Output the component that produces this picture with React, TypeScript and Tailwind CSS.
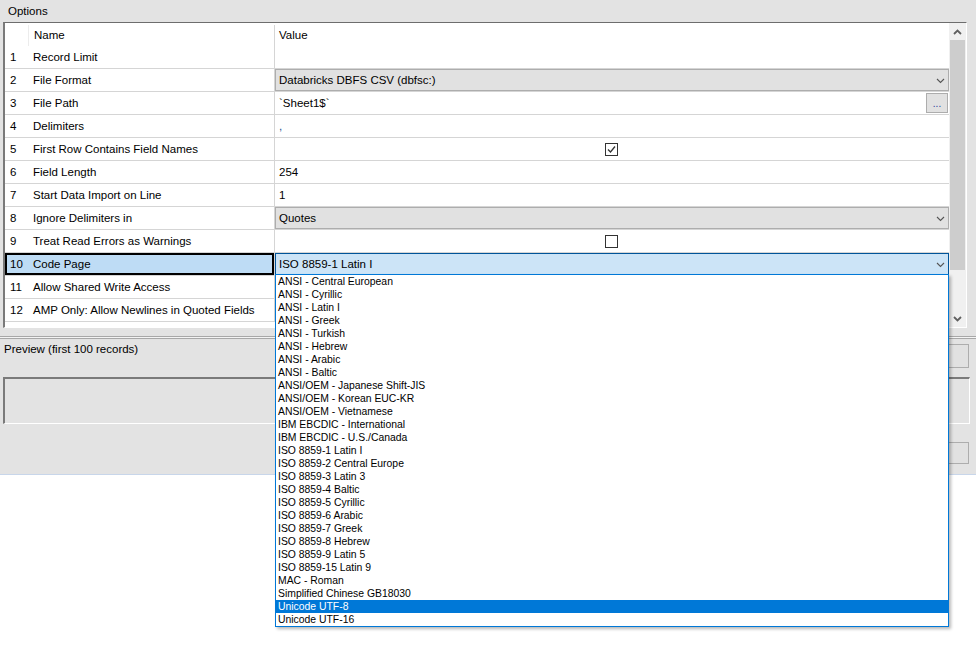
import React from 'react'

type Row = {
    n: number
    name: string
    kind: 'text' | 'combo' | 'path' | 'check' | 'active'
    value?: string
    checked?: boolean
}

const rows: Row[] = [
    { n: 1, name: 'Record Limit', kind: 'text', value: '' },
    { n: 2, name: 'File Format', kind: 'combo', value: 'Databricks DBFS CSV (dbfsc:)' },
    { n: 3, name: 'File Path', kind: 'path', value: '`Sheet1$`' },
    { n: 4, name: 'Delimiters', kind: 'text', value: ',' },
    { n: 5, name: 'First Row Contains Field Names', kind: 'check', checked: true },
    { n: 6, name: 'Field Length', kind: 'text', value: '254' },
    { n: 7, name: 'Start Data Import on Line', kind: 'text', value: '1' },
    { n: 8, name: 'Ignore Delimiters in', kind: 'combo', value: 'Quotes' },
    { n: 9, name: 'Treat Read Errors as Warnings', kind: 'check', checked: false },
    { n: 10, name: 'Code Page', kind: 'active', value: 'ISO 8859-1 Latin I' },
    { n: 11, name: 'Allow Shared Write Access', kind: 'text', value: '' },
    { n: 12, name: 'AMP Only: Allow Newlines in Quoted Fields', kind: 'text', value: '' },
]

const codePages = [
    'ANSI - Central European',
    'ANSI - Cyrillic',
    'ANSI - Latin I',
    'ANSI - Greek',
    'ANSI - Turkish',
    'ANSI - Hebrew',
    'ANSI - Arabic',
    'ANSI - Baltic',
    'ANSI/OEM - Japanese Shift-JIS',
    'ANSI/OEM - Korean EUC-KR',
    'ANSI/OEM - Vietnamese',
    'IBM EBCDIC - International',
    'IBM EBCDIC - U.S./Canada',
    'ISO 8859-1 Latin I',
    'ISO 8859-2 Central Europe',
    'ISO 8859-3 Latin 3',
    'ISO 8859-4 Baltic',
    'ISO 8859-5 Cyrillic',
    'ISO 8859-6 Arabic',
    'ISO 8859-7 Greek',
    'ISO 8859-8 Hebrew',
    'ISO 8859-9 Latin 5',
    'ISO 8859-15 Latin 9',
    'MAC - Roman',
    'Simplified Chinese GB18030',
    'Unicode UTF-8',
    'Unicode UTF-16',
]

const Chevron = ({ up = false, bold = false }: { up?: boolean; bold?: boolean }) => (
    <svg width="9" height="6" viewBox="0 0 9 6" className="shrink-0">
        <polyline
            points={up ? '1,5 4.5,1.5 8,5' : '1,1 4.5,4.5 8,1'}
            fill="none"
            stroke={bold ? '#606060' : '#555'}
            strokeWidth={bold ? 1.8 : 1.1}
        />
    </svg>
)

const ValueCell = ({ row }: { row: Row }) => {
    if (row.kind === 'combo') {
        return (
            <div className='h-full w-full flex items-center justify-between bg-[#e1e1e1] border border-[#adadad] pl-[3px] pr-[3px] pt-[1px]'>
                <span>{row.value}</span>
                <Chevron />
            </div>
        )
    }
    if (row.kind === 'active') {
        return (
            <div className='h-full w-full flex items-center justify-between bg-[#cce4f7] border border-[#005499] pl-[3px] pr-[3px] pt-[1px]'>
                <span>{row.value}</span>
                <Chevron />
            </div>
        )
    }
    if (row.kind === 'path') {
        return (
            <div className='h-full w-full flex items-center justify-between pl-[4px]'>
                <span className='pt-[2px]'>{row.value}</span>
                <div className='w-[22px] h-[20px] mr-[1px] bg-[#e1e1e1] border border-[#adadad] flex items-end justify-center pb-[3px] text-[10px] leading-none text-[#2b3f9c]'>...</div>
            </div>
        )
    }
    if (row.kind === 'check') {
        return (
            <div className='h-full w-full flex items-center justify-center pr-[2px]'>
                <div className='w-[13px] h-[13px] border border-[#333] bg-white flex items-center justify-center'>
                    {row.checked && (
                        <svg width="11" height="11" viewBox="0 0 11 11">
                            <polyline points="2,5.5 4.5,8 9,2.5" fill="none" stroke="#333" strokeWidth="1.3" />
                        </svg>
                    )}
                </div>
            </div>
        )
    }
    return (
        <div className={`h-full w-full flex items-center pl-[4px] pt-[2px] ${row.n === 4 ? 'text-[#1f4f8f]' : ''}`}>
            <span>{row.value}</span>
        </div>
    )
}

const GridRow = ({ row }: { row: Row }) => {
    const active = row.kind === 'active'
    return (
        <div className='h-[23px] flex border-b border-[#d5d5d5] bg-white'>
            {active ? (
                <div className='w-[269px] h-full flex items-center pt-[1px] border-2 border-black bg-[#bedcf5]'>
                    <div className='w-[21px] pl-[3px]'>{row.n}</div>
                    <div className='w-[244px] pl-[5px] whitespace-nowrap'>{row.name}</div>
                </div>
            ) : (
                <div className='w-[269px] h-full flex items-center pt-[2px]'>
                    <div className='w-[23px] pl-[5px]'>{row.n}</div>
                    <div className='w-[246px] pl-[5px] whitespace-nowrap'>{row.name}</div>
                </div>
            )}
            <div className='flex-1 h-full border-l border-[#d5d5d5]'>
                <ValueCell row={row} />
            </div>
        </div>
    )
}

const App = () => {
    return (
        <div className="relative w-[976px] h-[646px] bg-white text-black font-['Liberation_Sans',Arial,sans-serif] text-[11.5px] overflow-hidden">
            <div className='h-[475px] bg-[#e3e3e3] border-b border-[#c8d6ea] flex flex-col'>
                <div className='h-[22px] pl-[8px] pt-[3px]'>Options</div>

                {/* options grid */}
                <div className='ml-[3px] w-[964px] h-[306px] flex border-t border-l-2 border-t-[#6d6d6d] border-l-[#7a7a7a] border-r border-b border-r-white border-b-white'>
                    <div className='flex-1 flex flex-col bg-white'>
                        <div className='h-[23px] flex items-center pt-[2px]'>
                            <div className='w-[23px] h-full' />
                            <div className='w-[246px] h-full flex items-center pl-[5px] border-l border-[#ececec]'>Name</div>
                            <div className='flex-1 h-full flex items-center pl-[4px] border-l border-[#d5d5d5]'>Value</div>
                        </div>
                        {rows.map((r) => (
                            <GridRow key={r.n} row={r} />
                        ))}
                    </div>
                    <div className='w-[17px] flex flex-col bg-[#f0f0f0]'>
                        <div className='h-[17px] flex items-center justify-center'>
                            <Chevron up bold />
                        </div>
                        <div className='flex-1 px-[1px]'>
                            <div className='h-[230px] bg-[#cdcdcd]' />
                        </div>
                        <div className='h-[17px] flex items-center justify-center'>
                            <Chevron bold />
                        </div>
                    </div>
                </div>

                {/* splitter */}
                <div className='mt-[8px] h-[3px] border-y border-[#a8a8a8] bg-[#f4f4f4]' />

                <div className='h-[38px] flex items-start justify-between'>
                    <div className='pl-[4px] pt-[2px]'>Preview (first 100 records)</div>
                    <div className='mt-[5px] mr-[7px] w-[75px] h-[24px] border border-[#adadad] bg-[#e1e1e1]' />
                </div>

                <div className='ml-[3px] w-[967px] h-[47px] border-t-2 border-l-2 border-[#7a7a7a] border-r border-b border-r-white border-b-white' />

                <div className='mt-[18px] flex justify-end pr-[7px]'>
                    <div className='w-[75px] h-[22px] border border-[#adadad] bg-[#e1e1e1]' />
                </div>
            </div>

            {/* code page dropdown list */}
            <div className='absolute left-[275px] top-[274px] w-[674px] border border-[#0078d7] bg-white shadow-[2px_2px_3px_rgba(0,0,0,0.28)] text-[10.4px]'>
                {codePages.map((c) => (
                    <div
                        key={c}
                        className={`h-[13px] leading-[13px] pl-[2px] whitespace-nowrap ${c === 'Unicode UTF-8' ? 'bg-[#0078d7] text-white' : ''}`}
                    >
                        {c}
                    </div>
                ))}
            </div>
        </div>
    )
}

export default App
